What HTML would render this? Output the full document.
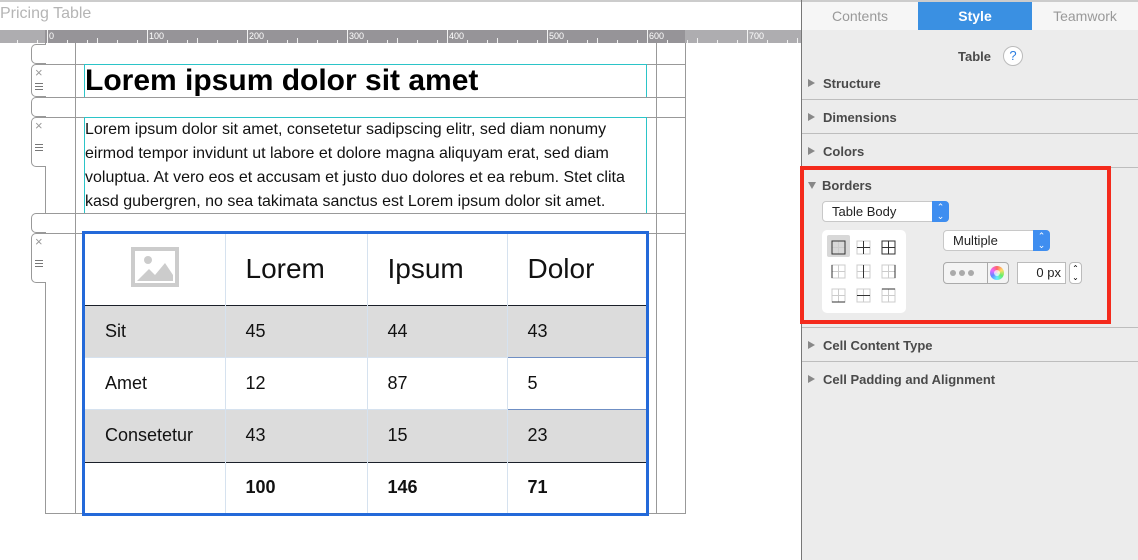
<!DOCTYPE html><html><head><style>
*{margin:0;padding:0;box-sizing:border-box}
body{width:1138px;height:560px;overflow:hidden;background:#fff;font-family:"Liberation Sans",Arial,sans-serif;position:relative}
.a{position:absolute}
.hl{position:absolute;height:1px;background:#999}
.vl{position:absolute;width:1px;background:#999}
.tab{position:absolute;left:31px;width:15px;border:1px solid #999;border-right:none;border-radius:5px 0 0 5px;background:#fff}
.x{position:absolute;left:3px;top:2px;font-size:13px;color:#999;line-height:12px}
.m{position:absolute;left:3px;width:8px;height:7px;border-top:1px solid #777;border-bottom:1px solid #777}
.m:after{content:"";position:absolute;left:0;top:2px;width:8px;height:1px;background:#777}
.sec{position:absolute;left:808px;font-size:13px;font-weight:bold;color:#4a4a4a}
.sec:before{content:"";display:inline-block;border-left:7px solid #888;border-top:4px solid transparent;border-bottom:4px solid transparent;margin-right:8px;vertical-align:1px}
.sep{position:absolute;left:802px;width:336px;height:1px;background:#bdbdbd}
td{border-right:1px solid #d6e2ef;font-size:18px;color:#111;padding-left:20px}
.p{white-space:nowrap}
</style></head><body>
<div class="a" style="left:0;top:0;width:801px;height:2px;background:#ccc"></div>
<div class="a" style="left:0;top:5px;font-size:16px;color:#b5b5b5">Pricing Table</div>
<div class="a" style="left:0;top:30px;width:801px;height:13px;background:#aeadb0"></div>
<div class="a" style="left:45px;top:30px;width:640px;height:13px;background:#969498"></div>
<svg class="a" style="left:0;top:30px" width="801" height="13">
<g stroke="#f2f2f2" stroke-width="1">
<path d="M17.5 10v3M37.5 10v3M47.5 0v13M67.5 10v3M87.5 10v3M97.5 8v5M117.5 10v3M137.5 10v3M147.5 0v13M167.5 10v3M187.5 10v3M197.5 8v5M217.5 10v3M237.5 10v3M247.5 0v13M267.5 10v3M287.5 10v3M297.5 8v5M317.5 10v3M337.5 10v3M347.5 0v13M367.5 10v3M387.5 10v3M397.5 8v5M417.5 10v3M437.5 10v3M447.5 0v13M467.5 10v3M487.5 10v3M497.5 8v5M517.5 10v3M537.5 10v3M547.5 0v13M567.5 10v3M587.5 10v3M597.5 8v5M617.5 10v3M637.5 10v3M647.5 0v13M667.5 10v3M687.5 10v3M697.5 8v5M717.5 10v3M737.5 10v3M747.5 0v13M767.5 10v3M787.5 10v3M797.5 8v5"/></g>
<g fill="#fff" font-size="9" font-family="Liberation Sans"><text x="49" y="9">0</text><text x="149" y="9">100</text><text x="249" y="9">200</text><text x="349" y="9">300</text><text x="449" y="9">400</text><text x="549" y="9">500</text><text x="649" y="9">600</text><text x="749" y="9">700</text></g></svg>
<div class="vl" style="left:45px;top:43px;height:470px"></div>
<div class="vl" style="left:75px;top:43px;height:470px"></div>
<div class="vl" style="left:656px;top:43px;height:470px"></div>
<div class="vl" style="left:685px;top:43px;height:471px"></div>
<div class="hl" style="left:45px;top:64px;width:640px"></div>
<div class="hl" style="left:45px;top:97px;width:640px"></div>
<div class="hl" style="left:45px;top:117px;width:640px"></div>
<div class="hl" style="left:45px;top:213px;width:640px"></div>
<div class="hl" style="left:45px;top:233px;width:640px"></div>
<div class="hl" style="left:45px;top:513px;width:640px"></div>
<div class="tab" style="top:44px;height:20px"></div>
<div class="tab" style="top:64px;height:33px"><span class="x">×</span><span class="m" style="top:18px"></span></div>
<div class="tab" style="top:97px;height:20px"></div>
<div class="tab" style="top:117px;height:50px"><span class="x">×</span><span class="m" style="top:26px"></span></div>
<div class="tab" style="top:213px;height:20px"></div>
<div class="tab" style="top:233px;height:50px"><span class="x">×</span><span class="m" style="top:26px"></span></div>
<div class="a" style="left:84px;top:64px;width:563px;height:33px;border:1px solid #2bc4c8;border-bottom:none"></div>
<div class="a" style="left:85px;top:64px;font-size:30px;font-weight:bold;line-height:34px">Lorem ipsum dolor sit amet</div>
<div class="a" style="left:84px;top:117px;width:563px;height:96px;border:1px solid #2bc4c8;border-bottom:none"></div>
<div class="a" style="left:85px;top:118px;font-size:16px;line-height:24px;color:#111"><div class="p">Lorem ipsum dolor sit amet, consetetur sadipscing elitr, sed diam nonumy</div><div class="p">eirmod tempor invidunt ut labore et dolore magna aliquyam erat, sed diam</div><div class="p">voluptua. At vero eos et accusam et justo duo dolores et ea rebum. Stet clita</div><div class="p">kasd gubergren, no sea takimata sanctus est Lorem ipsum dolor sit amet.</div></div>
<div class="a" style="left:82px;top:231px;width:567px;height:285px;border:3px solid #2369d9;background:#fff">
<table style="border-collapse:collapse;width:561px;table-layout:fixed">
<tr style="height:71px;border-bottom:1px solid #1a1f29"><td style="width:140px;padding:0;text-align:center"><svg width="48" height="40" viewBox="0 0 48 40"><rect x="2" y="2" width="44" height="36" fill="none" stroke="#ccc" stroke-width="4"/><circle cx="17" cy="13" r="4" fill="#ccc"/><path d="M6 34 L18 22 L24 28 L34 16 L42 28 L42 34Z" fill="#ccc"/></svg></td><td style="width:142px;font-size:28px">Lorem</td><td style="width:140px;font-size:28px">Ipsum</td><td style="font-size:28px;border-right:none">Dolor</td></tr>
<tr style="height:52px;background:#dcdcdc;border-bottom:1px solid #d6e2ef"><td>Sit</td><td>45</td><td>44</td><td style="border-right:none">43</td></tr>
<tr style="height:52px;border-bottom:1px solid #d6e2ef"><td>Amet</td><td>12</td><td>87</td><td style="border:1px solid #6f8fc4;border-right:none">5</td></tr>
<tr style="height:53px;background:#dcdcdc;border-bottom:1px solid #1a1f29"><td>Consetetur</td><td>43</td><td>15</td><td style="border-right:none">23</td></tr>
<tr style="height:51px"><td></td><td style="font-weight:bold">100</td><td style="font-weight:bold">146</td><td style="font-weight:bold;border-right:none">71</td></tr>
</table></div>
<div class="a" style="left:801px;top:0;width:337px;height:560px;background:#ececec;border-left:1px solid #777"></div>
<div class="a" style="left:802px;top:0;width:336px;height:2px;background:#ccc"></div>
<div class="a" style="left:802px;top:2px;width:336px;height:28px;background:#f6f6f6"></div>
<div class="a" style="left:802px;top:8px;width:116px;text-align:center;font-size:14px;color:#999">Contents</div>
<div class="a" style="left:918px;top:2px;width:114px;height:28px;background:#3a90e2;color:#fff;text-align:center;font-size:14px;font-weight:bold;line-height:28px">Style</div>
<div class="a" style="left:1032px;top:8px;width:106px;text-align:center;font-size:14px;color:#999">Teamwork</div>
<div class="a" style="left:958px;top:49px;font-size:13px;font-weight:bold;color:#4a4a4a">Table</div>
<div class="a" style="left:1003px;top:46px;width:20px;height:20px;border-radius:50%;background:#fff;border:1px solid #bbb;color:#2b7de0;font-size:13px;text-align:center;line-height:18px">?</div>
<div class="sec" style="top:76px">Structure</div>
<div class="sep" style="top:99px"></div>
<div class="sec" style="top:110px">Dimensions</div>
<div class="sep" style="top:133px"></div>
<div class="sec" style="top:144px">Colors</div>
<div class="sep" style="top:167px"></div>
<div class="a" style="left:808px;top:178px;font-size:13px;font-weight:bold;color:#4a4a4a"><span style="display:inline-block;border-top:7px solid #888;border-left:4px solid transparent;border-right:4px solid transparent;margin-right:6px;vertical-align:1px"></span>Borders</div>
<div class="a" style="left:822px;top:201px;width:127px;height:21px;background:#fff;border:1px solid #c8c8c8;border-radius:4px;font-size:13px;color:#222;padding-left:9px;line-height:19px">Table Body</div>
<div class="a" style="left:932px;top:201px;width:17px;height:21px;background:#3f8ef0;border-radius:0 4px 4px 0;color:#fff;font-size:9px;text-align:center;line-height:9px;padding-top:2px">⌃<br>⌄</div>
<div class="a" style="left:822px;top:230px;width:84px;height:83px;background:#fff;border-radius:5px"></div>
<svg class="a" style="left:822px;top:230px" width="84" height="83" fill="none">
<rect x="5" y="5" width="23" height="22" fill="#d8d8d8" rx="2"/>
<g stroke="#ccc"><path d="M10 11h13v13H10zM16.5 11v13M10 17.5h13"/><path d="M35 11h13v13H35z"/><path d="M10 35h13v13H10zM16.5 35v13M10 41.5h13M35 35h13v13H35zM41.5 35v13M35 41.5h13M60 35h13v13H60zM66.5 35v13M60 41.5h13M10 59h13v13H10zM16.5 59v13M10 65.5h13M35 59h13v13H35zM41.5 59v13M60 59h13v13H60zM66.5 59v13M60 65.5h13"/></g>
<g stroke="#333"><path d="M10 11h13v13H10zM41.5 11v13M35 17.5h13M60 11h13v13H60zM66.5 11v13M60 17.5h13M10 35v13M41.5 35v13M73 35v13M10 72h13M35 65.5h13M60 59h13"/></g></svg>
<div class="a" style="left:943px;top:230px;width:107px;height:21px;background:#fff;border:1px solid #c8c8c8;border-radius:4px;font-size:13px;color:#222;padding-left:9px;line-height:19px">Multiple</div>
<div class="a" style="left:1033px;top:230px;width:17px;height:21px;background:#3f8ef0;border-radius:0 4px 4px 0;color:#fff;font-size:9px;text-align:center;line-height:9px;padding-top:2px">⌃<br>⌄</div>
<div class="a" style="left:943px;top:262px;width:66px;height:22px;background:#f4f4f4;border:1px solid #aaa;border-radius:4px"></div>
<svg class="a" style="left:943px;top:262px" width="66" height="22"><circle cx="10" cy="11" r="3" fill="#aaa"/><circle cx="19" cy="11" r="3" fill="#aaa"/><circle cx="28" cy="11" r="3" fill="#aaa"/><line x1="44.5" y1="0" x2="44.5" y2="22" stroke="#aaa"/></svg>
<div class="a" style="left:990px;top:266px;width:14px;height:14px;border-radius:50%;background:conic-gradient(#f66,#fd6,#6e6,#6ef,#68f,#e6f,#f66)"></div>
<div class="a" style="left:994px;top:270px;width:6px;height:6px;border-radius:50%;background:#fff;opacity:.7"></div>
<div class="a" style="left:1017px;top:262px;width:49px;height:22px;background:#fff;border:1px solid #bbb;text-align:right;padding-right:4px;font-size:13px;line-height:20px;color:#222">0 px</div>
<div class="a" style="left:1069px;top:262px;width:13px;height:22px;background:#fff;border:1px solid #bbb;border-radius:4px;font-size:8px;line-height:9px;text-align:center;padding-top:1px">⌃<br>⌄</div>
<div class="a" style="left:800px;top:166px;width:311px;height:158px;border:4px solid #f42a1c"></div>
<div class="sep" style="top:327px"></div>
<div class="sec" style="top:338px">Cell Content Type</div>
<div class="sep" style="top:361px"></div>
<div class="sec" style="top:372px">Cell Padding and Alignment</div>
</body></html>
